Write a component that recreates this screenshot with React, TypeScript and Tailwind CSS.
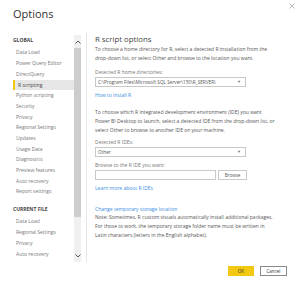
import React from "react";

const font = { fontFamily: '"Open Sans", "Noto Sans", sans-serif' };

function Chevron({ up }: { up?: boolean }) {
  return (
    <svg width="6" height="4" viewBox="0 0 6 4" className="block">
      <path
        d={up ? "M0.5 3.5 L3 1 L5.5 3.5" : "M0.5 0.5 L3 3 L5.5 0.5"}
        fill="none"
        stroke="#555"
        strokeWidth="1"
      />
    </svg>
  );
}

function NavItem({ label, selected }: { label: string; selected?: boolean }) {
  return (
    <div
      className={`h-[10.7px] flex items-center pl-[3px] text-[5px] leading-none ${
        selected ? "bg-[#e6e6e6] border-l-2 border-[#f2c811] pl-[1px] text-[#444]" : "text-[#777]"
      }`}
    >
      {label}
    </div>
  );
}

function Select({ value }: { value: string }) {
  return (
    <div className="w-[151px] h-[10px] border border-[#c8c8c8] flex items-center justify-between pl-[2px] pr-[4px] text-[4.7px] text-[#555] leading-none">
      <span className="whitespace-nowrap">{value}</span>
      <span className="text-[4px] text-[#777]">▼</span>
    </div>
  );
}

export default function App() {
  const global = [
    "Data Load",
    "Power Query Editor",
    "DirectQuery",
    "R scripting",
    "Python scripting",
    "Security",
    "Privacy",
    "Regional Settings",
    "Updates",
    "Usage Data",
    "Diagnostics",
    "Preview features",
    "Auto recovery",
    "Report settings",
  ];
  const current = ["Data Load", "Regional Settings", "Privacy", "Auto recovery"];
  return (
    <div className="w-[300px] h-[284px] bg-white overflow-hidden flex flex-col" style={font}>
      <div className="flex justify-between items-start h-[33px]">
        <div className="pl-[13px] pt-[7px] text-[11px] leading-[14px] text-[#333]">Options</div>
        <div className="pr-[5px] pt-[3px]">
          <svg width="6" height="6" viewBox="0 0 6 6">
            <path d="M0.5 0.5 L5.5 5.5 M5.5 0.5 L0.5 5.5" stroke="#999" strokeWidth="0.7" />
          </svg>
        </div>
      </div>
      <div className="flex h-[229px]">
        <div className="pl-[13px] w-[61px] box-content flex flex-col">
          <div className="h-[14.6px] flex items-center pt-[1px] text-[5px] font-bold text-[#444] leading-none">
            GLOBAL
          </div>
          {global.map((g) => (
            <NavItem key={g} label={g} selected={g === "R scripting"} />
          ))}
          <div className="h-[19.4px] flex items-end pb-[5px] text-[5px] font-bold text-[#444] leading-none">
            CURRENT FILE
          </div>
          {current.map((g) => (
            <NavItem key={"c" + g} label={g} />
          ))}
        </div>
        <div className="w-[7px] mt-[2px] bg-[#f0f0f0] flex flex-col items-center">
          <div className="h-[13px] flex items-center justify-center">
            <Chevron up />
          </div>
          <div className="w-[7px] h-[169px] bg-[#cdcdcd]" />
          <div className="flex-1" />
          <div className="h-[12px] flex items-center justify-center">
            <Chevron />
          </div>
        </div>
        <div className="w-[5px]" />
        <div className="w-px bg-[#e6e6e6]" />
        <div className="pl-[8px] flex flex-col text-[#555]">
          <div className="text-[7.8px] leading-[10px] text-[#444] mt-[1px]">R script options</div>
          <div className="text-[5px] leading-[9px] mt-[1px] text-[#555] whitespace-nowrap">
            <div>To choose a home directory for R, select a detected R installation from the</div>
            <div>drop-down list, or select Other and browse to the location you want.</div>
          </div>
          <div className="text-[5px] leading-[8px] mt-[5px] text-[#777]">Detected R home directories:</div>
          <div className="mt-[1px]">
            <Select value="C:\Program Files\Microsoft SQL Server\150\R_SERVER\" />
          </div>
          <div className="text-[5px] leading-[8px] mt-[4px] text-[#3a8ee0]">How to install R</div>
          <div className="text-[5px] leading-[9px] mt-[9px] text-[#555] whitespace-nowrap">
            <div>To choose which R integrated development environment (IDE) you want</div>
            <div>Power BI Desktop to launch, select a detected IDE from the drop-down list, or</div>
            <div>select Other to browse to another IDE on your machine.</div>
          </div>
          <div className="text-[5px] leading-[8px] mt-[3px] text-[#777]">Detected R IDEs:</div>
          <div className="mt-[1px]">
            <Select value="Other" />
          </div>
          <div className="text-[5px] leading-[8px] mt-[4px] text-[#777]">Browse to the R IDE you want:</div>
          <div className="flex gap-[2px] mt-[1px]">
            <div className="w-[121px] h-[10px] border border-[#c8c8c8]" />
            <div className="w-[29px] h-[10px] border border-[#c8c8c8] flex items-center justify-center text-[4.5px] text-[#555] leading-none">
              Browse
            </div>
          </div>
          <div className="text-[5px] leading-[8px] mt-[4px] text-[#3a8ee0]">Learn more about R IDEs</div>
          <div className="text-[5px] leading-[8px] mt-[13px] text-[#3a8ee0]">Change temporary storage location</div>
          <div className="text-[5px] leading-[9px] text-[#555] whitespace-nowrap">
            <div>Note: Sometimes, R custom visuals automatically install additional packages.</div>
            <div>For those to work, the temporary storage folder name must be written in</div>
            <div>Latin characters (letters in the English alphabet).</div>
          </div>
        </div>
      </div>
      <div className="flex justify-end gap-[6px] pr-[13px] mt-[4px]">
        <div className="w-[26px] h-[10px] bg-[#f2c811] flex items-center justify-center text-[4.5px] text-[#333] leading-none">
          OK
        </div>
        <div className="w-[27px] h-[10px] border border-[#8a8a8a] flex items-center justify-center text-[4.5px] text-[#333] leading-none">
          Cancel
        </div>
      </div>
    </div>
  );
}
